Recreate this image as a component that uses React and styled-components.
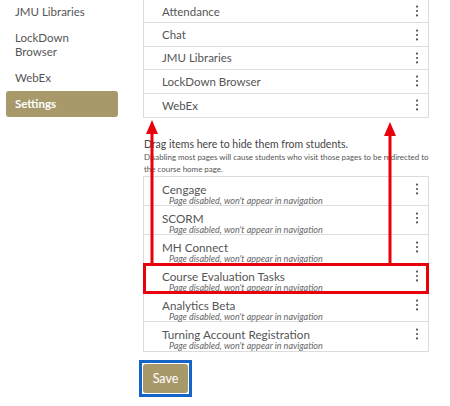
import React from 'react';
import styled, { createGlobalStyle } from 'styled-components';

const GlobalStyle = createGlobalStyle`
  body {
    margin: 0;
    background: #fff;
    font-family: Lato, 'Liberation Sans', sans-serif;
    color: #4d4d4d;
  }
`;

const Page = styled.div`
  position: relative;
  display: flex;
  gap: 25px;
  width: 450px;
  height: 406px;
  overflow: hidden;
`;

const Sidebar = styled.nav`
  width: 118px;
  box-sizing: border-box;
  padding-left: 6px;
  display: flex;
  flex-direction: column;
`;

const NavItem = styled.div`
  padding: ${p => (p.first ? '5px' : '6px')} 9px 6px;
  font-size: 11.5px;
  line-height: 14px;
  color: #555;
  border-radius: 3px;
  ${p => p.active && `
    padding: 6px 9px;
    background: #a8996b;
    color: #fff;
    font-weight: 700;
  `}
`;

const Main = styled.div`
  width: 286px;
  display: flex;
  flex-direction: column;
`;

const List = styled.div`
  border: 1px solid #dcdcdc;
  border-top: ${p => (p.open ? 'none' : '1px solid #dcdcdc')};
`;

const TopRow = styled.div`
  height: 23.4px;
  box-sizing: border-box;
  display: flex;
  align-items: center;
  justify-content: space-between;
  padding: 0 9px 0 18px;
  font-size: 11.5px;
  color: #555;
  border-bottom: 1px solid #dcdcdc;
  &:last-child { border-bottom: none; }
`;

const HiddenRow = styled.div`
  position: relative;
  display: flex;
  justify-content: space-between;
  align-items: flex-start;
  padding: 5px 9px 0 18px;
  height: 29px;
  box-sizing: border-box;
  border-bottom: 1px solid #dcdcdc;
  &:last-child { border-bottom: none; }
  ${p => p.marked && `
    outline: 3px solid #e8000b;
    outline-offset: -2px;
    z-index: 1;
  `}
`;

const RowText = styled.div`
  display: flex;
  flex-direction: column;
`;

const Title = styled.span`
  font-size: 11.7px;
  line-height: 14px;
  color: #555;
`;

const Subtitle = styled.span`
  font-size: 9px;
  line-height: 9px;
  font-style: italic;
  color: #666;
  padding-left: 7px;
`;

const Hint = styled.p`
  margin: 19px 0 0 1px;
  font-size: 10.5px;
  line-height: 14px;
  color: #444;
`;

const SmallHint = styled.p`
  margin: 0 0 1px 1px;
  font-size: 7.95px;
  line-height: 12px;
  color: #555;
`;

const FocusRing = styled.div`
  align-self: flex-start;
  margin: 8px 0 0 -4px;
  padding: 1px;
  border: 3px solid #1565c9;
  display: flex;
`;

const SaveButton = styled.button`
  width: 45px;
  height: 29px;
  padding: 0;
  border: none;
  border-radius: 3px;
  background: #a8996b;
  color: #fff;
  font-family: Lato, 'Liberation Sans', sans-serif;
  font-size: 12.5px;
  outline: none;
`;

const Arrows = styled.svg`
  position: absolute;
  left: 0;
  top: 0;
  pointer-events: none;
`;

function Kebab({ top }) {
  return (
    <svg width="4" height="12" viewBox="0 0 4 12" style={{ marginTop: top }}>
      <circle cx="2" cy="1.6" r="1.1" fill="#555" />
      <circle cx="2" cy="6" r="1.1" fill="#555" />
      <circle cx="2" cy="10.4" r="1.1" fill="#555" />
    </svg>
  );
}

const shown = ['Attendance', 'Chat', 'JMU Libraries', 'LockDown Browser', 'WebEx'];
const hidden = [
  'Cengage',
  'SCORM',
  'MH Connect',
  'Course Evaluation Tasks',
  'Analytics Beta',
  'Turning Account Registration',
];

export default function App() {
  return (
    <>
      <GlobalStyle />
      <Page>
        <Sidebar>
          <NavItem first>JMU Libraries</NavItem>
          <NavItem>LockDown<br />Browser</NavItem>
          <NavItem>WebEx</NavItem>
          <NavItem active>Settings</NavItem>
        </Sidebar>
        <Main>
          <List open>
            {shown.map(name => (
              <TopRow key={name}>
                <span>{name}</span>
                <Kebab />
              </TopRow>
            ))}
          </List>
          <Hint>Drag items here to hide them from students.</Hint>
          <SmallHint>
            Disabling most pages will cause students who visit those pages to be redirected to
            the course home page.
          </SmallHint>
          <List>
            {hidden.map(name => (
              <HiddenRow key={name} marked={name === 'Course Evaluation Tasks'}>
                <RowText>
                  <Title>{name}</Title>
                  <Subtitle>Page disabled, won't appear in navigation</Subtitle>
                </RowText>
                <Kebab top="1px" />
              </HiddenRow>
            ))}
          </List>
          <FocusRing>
            <SaveButton>Save</SaveButton>
          </FocusRing>
        </Main>
        <Arrows width="450" height="406">
          <g fill="#e8000b">
            <rect x="150.5" y="132" width="3" height="131" />
            <polygon points="152,120 146,134 158,134" />
            <rect x="388.5" y="134" width="3" height="129" />
            <polygon points="390,122 384,136 396,136" />
          </g>
        </Arrows>
      </Page>
    </>
  );
}
